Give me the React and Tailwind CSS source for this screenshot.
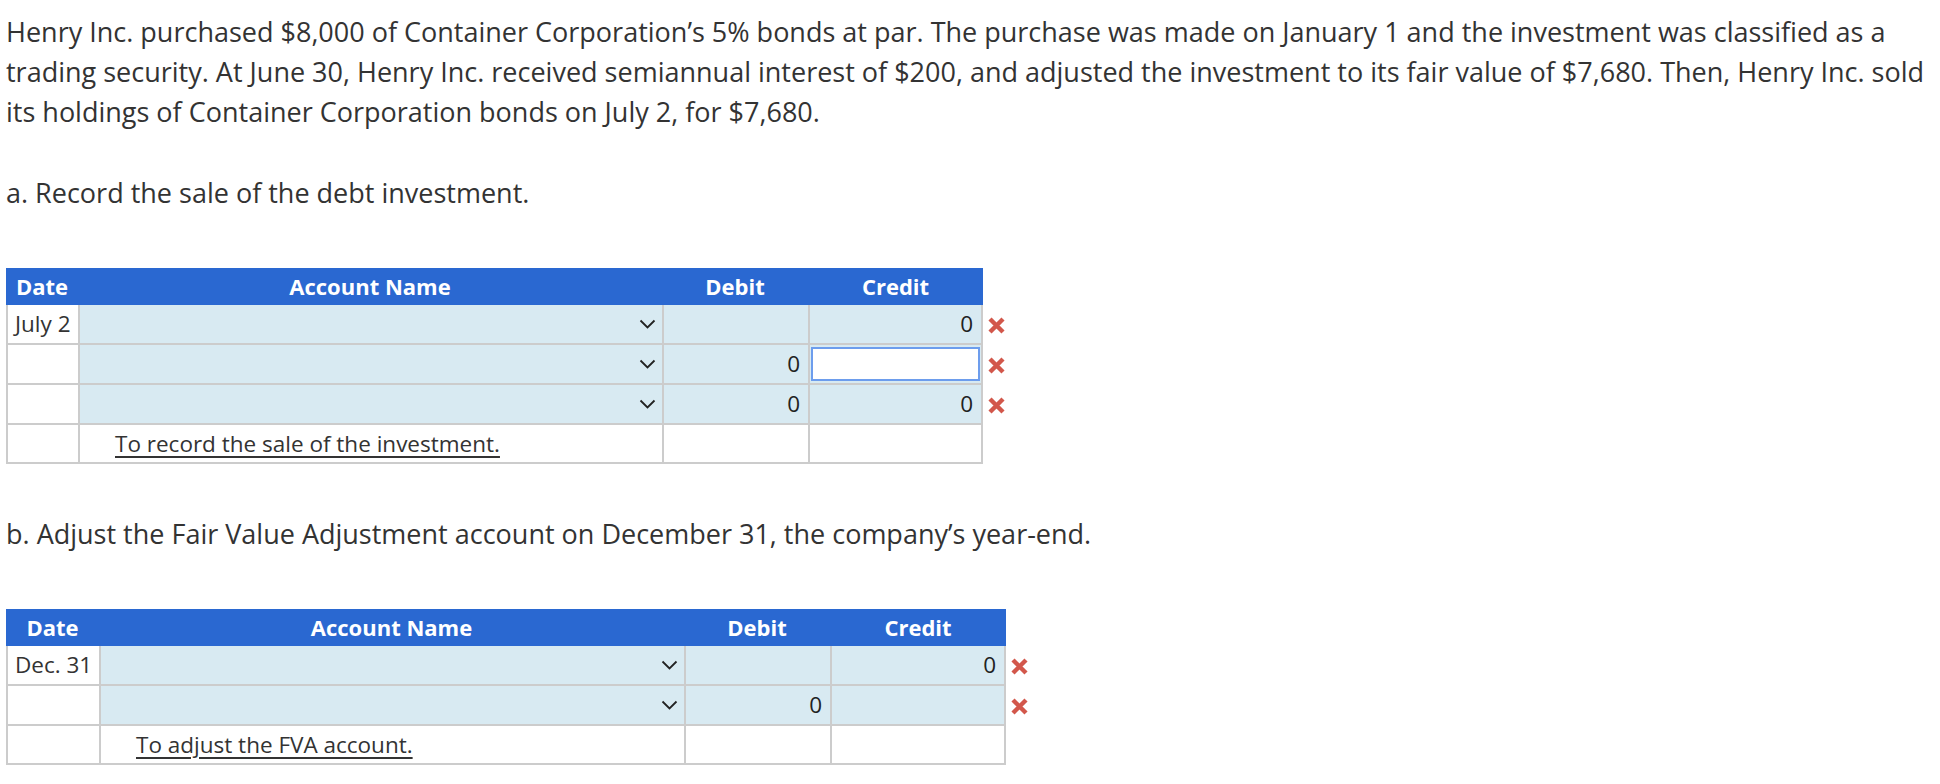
import React from "react";

const font = { fontFamily: '"Open Sans", "Noto Sans", sans-serif' };

function Chevron() {
  return (
    <svg width="17" height="10" viewBox="0 0 17 10" className="shrink-0">
      <polyline points="1.5,1.5 8.5,8.5 15.5,1.5" fill="none" stroke="#222" strokeWidth="1.8" />
    </svg>
  );
}

function RedX() {
  return (
    <svg width="17" height="17" viewBox="0 0 17 17">
      <path d="M2 2 L15 15 M15 2 L2 15" stroke="#d2574b" strokeWidth="4.4" strokeLinecap="butt" />
    </svg>
  );
}

function Journal({ cols, rows, memo }) {
  return (
    <div className="flex flex-col">
      {/* header */}
      <div className="flex">
        <div className={`grid ${cols} h-[37px] bg-[#2a68d1] text-white font-bold text-[22px] items-center`}>
          <div className="text-center">Date</div>
          <div className="text-center">Account Name</div>
          <div className="text-center">Debit</div>
          <div className="text-center">Credit</div>
        </div>
      </div>

      {rows.map((r, i) => (
        <div key={i} className="flex items-center">
          <div className={`grid ${cols} h-[40px] text-[22.5px] text-[#222]`}>
            <div className="border-l-2 border-b-2 border-[#cccccc] bg-white flex items-center pl-[7px] text-[#333]">
              {r.date}
            </div>
            <div className="border-l-2 border-b-2 border-[#cccccc] bg-[#d8eaf2] flex items-center justify-end pr-[6px]">
              <Chevron />
            </div>
            <div className="border-l-2 border-b-2 border-[#cccccc] bg-[#d8eaf2] flex items-center justify-end pr-[8px]">
              {r.debit}
            </div>
            <div className="border-l-2 border-r-2 border-b-2 border-[#cccccc] bg-[#d8eaf2] flex items-center justify-end pr-[8px]">
              {r.focus ? (
                <div className="w-[calc(100%+6px)] -mr-[7px] h-[34px] bg-white border-2 border-[#6d9ded]"></div>
              ) : (
                r.credit
              )}
            </div>
          </div>
          <div className="ml-[5px] flex items-center">
            <RedX />
          </div>
        </div>
      ))}

      <div className="flex">
        <div className={`grid ${cols} h-[39px] text-[22.5px] text-[#333]`}>
          <div className="border-l-2 border-b-2 border-[#cccccc] bg-white"></div>
          <div className="border-l-2 border-b-2 border-[#cccccc] bg-white flex items-center pl-[35px]">
            <span className="underline decoration-[2px] underline-offset-[4px]">{memo}</span>
          </div>
          <div className="border-l-2 border-b-2 border-[#cccccc] bg-white"></div>
          <div className="border-l-2 border-r-2 border-b-2 border-[#cccccc] bg-white"></div>
        </div>
      </div>
    </div>
  );
}

export default function App() {
  return (
    <div className="w-[1940px] h-[784px] bg-white overflow-hidden px-[6px]" style={font}>
      <p className="pt-[12px] text-[27px] leading-[40px] text-[#333]">
        Henry Inc. purchased $8,000 of Container Corporation’s 5% bonds at par. The purchase was made on January 1 and the investment was classified as a
        <br />
        trading security. At June 30, Henry Inc. received semiannual interest of $200, and adjusted the investment to its fair value of $7,680. Then, Henry Inc. sold
        <br />
        its holdings of Container Corporation bonds on July 2, for $7,680.
      </p>

      <p className="mt-[41px] text-[27px] leading-[40px] text-[#333]">a. Record the sale of the debt investment.</p>

      <div className="mt-[55px]">
        <Journal
          cols="grid-cols-[72px_584px_146px_175px]"
          rows={[
            { date: "July 2", debit: "", credit: "0" },
            { date: "", debit: "0", credit: "", focus: true },
            { date: "", debit: "0", credit: "0" },
          ]}
          memo="To record the sale of the investment."
        />
      </div>

      <p className="mt-[50px] text-[27px] leading-[40px] text-[#333]">
        b. Adjust the Fair Value Adjustment account on December 31, the company’s year-end.
      </p>

      <div className="mt-[55px]">
        <Journal
          cols="grid-cols-[93px_585px_146px_176px]"
          rows={[
            { date: "Dec. 31", debit: "", credit: "0" },
            { date: "", debit: "0", credit: "" },
          ]}
          memo="To adjust the FVA account."
        />
      </div>
    </div>
  );
}
